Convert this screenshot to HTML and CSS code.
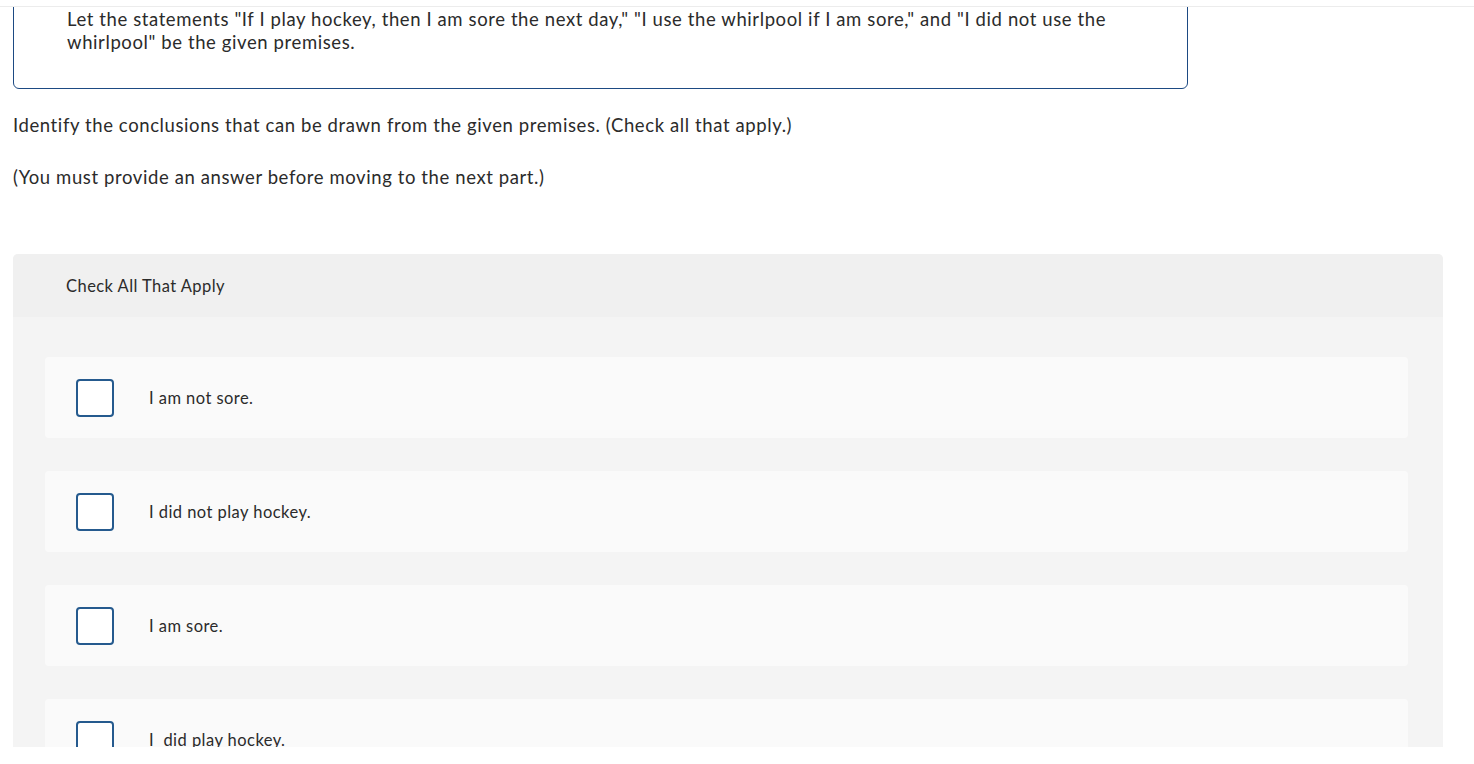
FILE: index.html
```html
<!DOCTYPE html>
<html lang="en">
<head>
<meta charset="utf-8">
<title>Question</title>
<link rel="stylesheet" href="styles.css">
</head>
<body>
<div class="viewport">
  <div class="content">
    <div class="premise-box">
      <p>Let the statements "If I play hockey, then I am sore the next day," "I use the whirlpool if I am sore," and "I did not use the whirlpool" be the given premises.</p>
    </div>
    <p class="prompt">Identify the conclusions that can be drawn from the given premises. (Check all that apply.)</p>
    <p class="prompt note">(You must provide an answer before moving to the next part.)</p>
    <div class="panel">
      <div class="panel-head">Check All That Apply</div>
      <div class="panel-body">
        <label class="option"><span class="box"></span><span class="opt-text">I am not sore.</span></label>
        <label class="option"><span class="box"></span><span class="opt-text">I did not play hockey.</span></label>
        <label class="option"><span class="box"></span><span class="opt-text">I am sore.</span></label>
        <label class="option"><span class="box"></span><span class="opt-text">I&nbsp; did play hockey.</span></label>
      </div>
    </div>
  </div>
</div>
</body>
</html>
```
FILE: styles.css
```css
html, body {
  margin: 0;
  padding: 0;
  background: #fff;
}
body {
  font-family: "Lato", "Open Sans", sans-serif;
  color: #2b2b2b;
  height: 764px;
  overflow: hidden;
}
.viewport {
  margin-top: 6px;
  border-top: 1px solid #ececec;
  height: 740px;
  overflow: hidden;
}
.content {
  padding: 0 0 0 13px;
  width: 1430px;
}
.premise-box {
  margin-top: -30px;
  width: 1175px;
  border: 1.5px solid #1d4a83;
  border-radius: 6px;
  padding: 30px 40px 33px 53px;
  box-sizing: border-box;
  height: 112px;
}
.premise-box p {
  margin: 0;
  font-size: 18.5px;
  line-height: 23px;
  letter-spacing: 0.6px;
}
.prompt {
  margin: 24px 0 0;
  font-size: 18.5px;
  line-height: 24px;
  letter-spacing: 0.6px;
}
.prompt.note {
  margin-top: 28px;
}
.panel {
  margin-top: 65px;
  width: 1430px;
  border-radius: 5px 5px 0 0;
  overflow: hidden;
  background: #f4f4f4;
}
.panel-head {
  background: #f0f0f0;
  height: 63px;
  padding-left: 53px;
  box-sizing: border-box;
  display: flex;
  align-items: center;
  font-size: 16.5px;
  letter-spacing: 0.45px;
}
.panel-body {
  padding: 40px 35px 40px 32px;
  display: flex;
  flex-direction: column;
  gap: 33px;
}
.option {
  display: flex;
  align-items: center;
  height: 81px;
  background: #fafafa;
  border-radius: 4px;
  padding-left: 31px;
  font-size: 16.5px;
  letter-spacing: 0.45px;
}
.box {
  width: 34px;
  height: 34px;
  border: 2px solid #255a8e;
  border-radius: 4px;
  background: #fff;
  flex: none;
}
.opt-text {
  margin-left: 35px;
}
```
